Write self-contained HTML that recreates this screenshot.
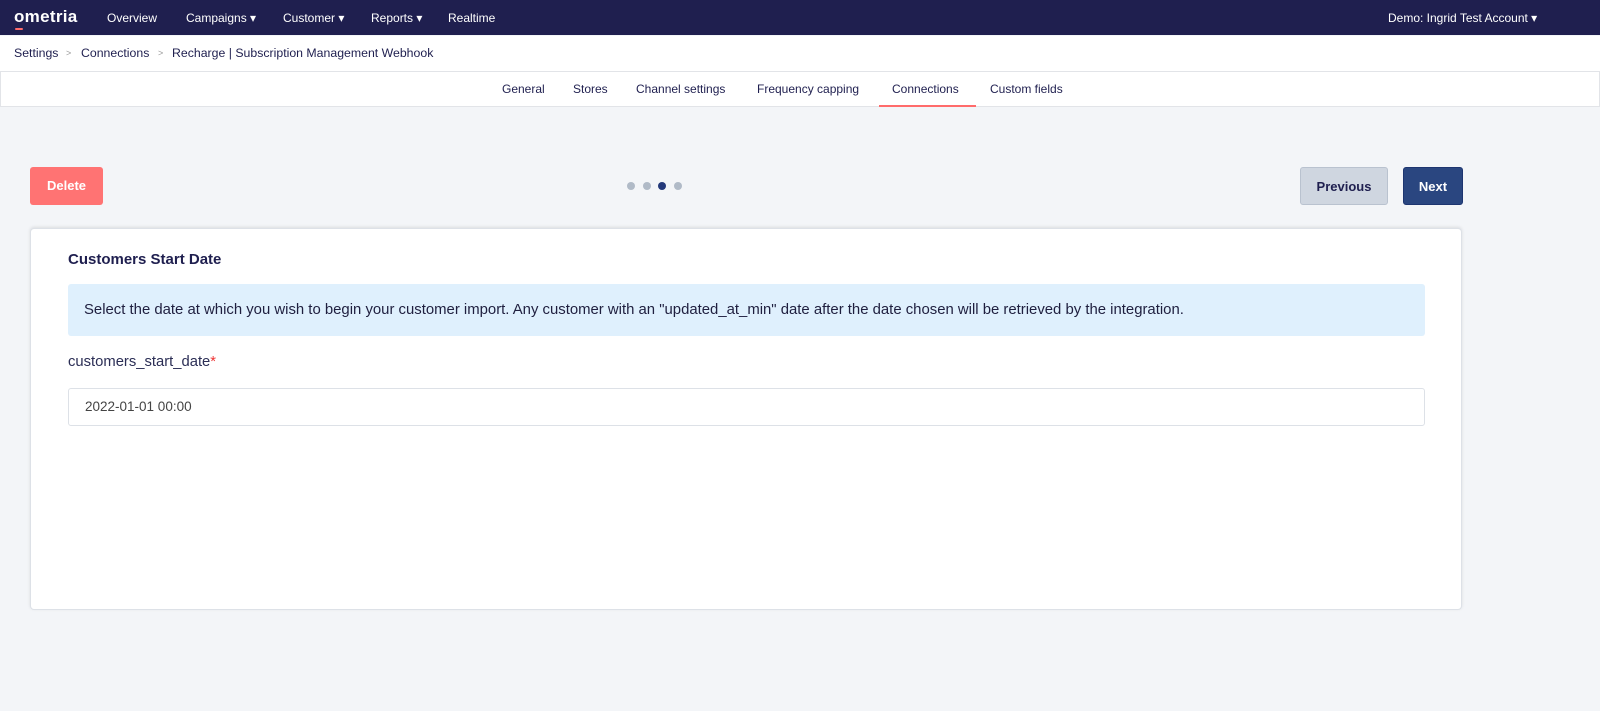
<!DOCTYPE html>
<html><head><style>
*{box-sizing:border-box;margin:0;padding:0}
body{width:1600px;height:711px;background:#f3f5f8;font-family:"Liberation Sans",sans-serif;position:relative;overflow:hidden}
.nav{position:absolute;left:0;top:0;width:1600px;height:35px;background:#1f1f4f;color:#fff;font-size:12px}
.nav span{position:absolute;top:11px}
.logo{font-size:17px;font-weight:bold;top:7px!important;letter-spacing:0.3px}
.logo:after{content:"";position:absolute;left:1px;top:21px;width:8px;height:2px;background:#ff6b6b;border-radius:1px}
.crumb{position:absolute;top:36px;left:0;width:1600px;height:35px;background:#fff;font-size:12.3px;color:#1f1f4f}
.crumb span{position:absolute;top:10px}
.tabs{position:absolute;top:71px;left:0;width:1600px;height:36px;background:#fff;border:1px solid #e2e4e8;font-size:12px;color:#1f1f4f}
.tabs span{position:absolute;top:10px}
.btn{position:absolute;top:167px;height:38px;border-radius:3px;font-size:13px;font-weight:bold;text-align:center;line-height:38px}
.dot{position:absolute;top:182px;width:8px;height:8px;border-radius:50%;background:#b0bac7}
.card{position:absolute;left:30px;top:228px;width:1432px;height:382px;background:#fff;border:1px solid #dde1e7;border-radius:4px;box-shadow:0 -1px 3px rgba(0,0,0,0.1)}
</style></head><body>
<div class="nav">
<span class="logo" style="left:14px">ometria</span>
<span style="left:107px">Overview</span>
<span style="left:186px">Campaigns ▾</span>
<span style="left:283px">Customer ▾</span>
<span style="left:371px">Reports ▾</span>
<span style="left:448px">Realtime</span>
<span style="left:1388px">Demo: Ingrid Test Account ▾</span>
</div>
<div class="crumb">
<span style="left:14px">Settings</span><span style="left:66px;color:#999;font-size:9px;top:12px">&gt;</span>
<span style="left:81px">Connections</span><span style="left:158px;color:#999;font-size:9px;top:12px">&gt;</span>
<span style="left:172px">Recharge | Subscription Management Webhook</span>
</div>
<div class="tabs">
<span style="left:501px">General</span>
<span style="left:572px">Stores</span>
<span style="left:635px">Channel settings</span>
<span style="left:756px">Frequency capping</span>
<span style="left:891px">Connections</span>
<span style="left:989px">Custom fields</span>
<div style="position:absolute;left:878px;top:33px;width:97px;height:2px;background:#ff6b6b"></div>
</div>
<div class="btn" style="left:30px;width:73px;background:#ff7373;color:#fff">Delete</div>
<div class="dot" style="left:627px"></div><div class="dot" style="left:643px"></div>
<div class="dot" style="left:658px;background:#23397a"></div><div class="dot" style="left:674px"></div>
<div class="btn" style="left:1300px;width:88px;background:#cfd6e0;border:1px solid #b9c2cf;color:#1f1f4f">Previous</div>
<div class="btn" style="left:1403px;width:60px;background:#2a4680;border:1px solid #1d3570;color:#fff">Next</div>
<div class="card">
<div style="position:absolute;left:37px;top:22px;font-size:15px;font-weight:bold;color:#1f1f4f">Customers Start Date</div>
<div style="position:absolute;left:37px;top:55px;width:1357px;height:52px;background:#dff0fd;border-radius:3px;font-size:14.9px;color:#1f1f3f;line-height:52px;padding-left:16px;white-space:nowrap">Select the date at which you wish to begin your customer import. Any customer with an "updated_at_min" date after the date chosen will be retrieved by the integration.</div>
<div style="position:absolute;left:37px;top:125px;font-size:14.8px;color:#2b2e55">customers_start_date<span style="color:#e33">*</span></div>
<div style="position:absolute;left:37px;top:159px;width:1357px;height:38px;border:1px solid #dde1e7;border-radius:3px;font-size:13.5px;color:#444;line-height:36px;padding-left:16px">2022-01-01 00:00</div>
</div>
</body></html>
